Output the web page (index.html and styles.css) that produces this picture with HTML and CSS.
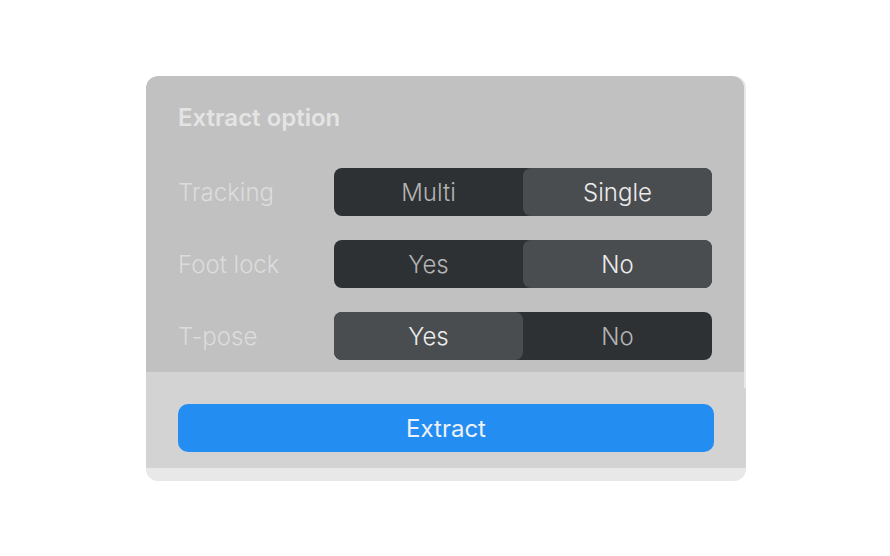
FILE: index.html
```html
<!DOCTYPE html>
<html>
<head>
<meta charset="utf-8">
<link rel="stylesheet" href="styles.css">
</head>
<body>
<div class="page">
  <div class="card">
    <div class="options">
      <div class="title">Extract option</div>
      <div class="rows">
        <div class="row">
          <div class="label">Tracking</div>
          <div class="seg">
            <div class="seg-item">Multi</div>
            <div class="seg-item active">Single</div>
          </div>
        </div>
        <div class="row">
          <div class="label">Foot lock</div>
          <div class="seg">
            <div class="seg-item">Yes</div>
            <div class="seg-item active">No</div>
          </div>
        </div>
        <div class="row">
          <div class="label">T-pose</div>
          <div class="seg">
            <div class="seg-item active">Yes</div>
            <div class="seg-item">No</div>
          </div>
        </div>
      </div>
    </div>
    <div class="footer">
      <button class="extract">Extract</button>
    </div>
  </div>
</div>
</body>
</html>
```

FILE: styles.css
```css
html, body {
  margin: 0;
  padding: 0;
  background: #ffffff;
}
body {
  font-family: Inter, "Noto Sans", sans-serif;
}
.page {
  width: 890px;
  height: 556px;
  padding-top: 76px;
  padding-left: 146px;
  box-sizing: border-box;
}
.card {
  width: 600px;
  background: #e8e8e8;
  border-radius: 12px;
  overflow: hidden;
  padding-bottom: 13px;
}
.options {
  background: #c1c1c1;
  margin-right: 2px;
  border-radius: 12px 12px 0 0;
  padding: 29px 32px 12px 32px;
}
.title {
  font-size: 24px;
  line-height: 26px;
  font-weight: 600;
  color: #e4e4e4;
}
.rows {
  margin-top: 37px;
  display: flex;
  flex-direction: column;
  gap: 24px;
}
.row {
  display: flex;
  align-items: center;
  height: 48px;
}
.label {
  width: 156px;
  font-size: 24px;
  line-height: 28px;
  padding-top: 2px;
  font-weight: 300;
  color: #dcdcdc;
}
.seg {
  width: 378px;
  height: 48px;
  display: flex;
  background: #2e3134;
  border-radius: 8px;
}
.seg-item {
  flex: 1;
  display: flex;
  align-items: center;
  justify-content: center;
  font-size: 24px;
  line-height: 28px;
  padding-top: 2px;
  font-weight: 300;
  color: #b4b4b4;
  border-radius: 8px;
}
.seg-item.active {
  background: #4a4d50;
  color: #ececec;
}
.footer {
  position: relative;
  background: #d3d3d3;
  padding: 32px 32px 16px 32px;
}
.footer::after {
  content: "";
  position: absolute;
  top: 0;
  right: 0;
  width: 2px;
  height: 16px;
  background: #e8e8e8;
}
.extract {
  display: block;
  width: 536px;
  height: 48px;
  border: none;
  border-radius: 10px;
  background: #248df2;
  color: #eef2f8;
  font-family: Inter, "Noto Sans", sans-serif;
  font-size: 24px;
  line-height: 28px;
  font-weight: 400;
  padding: 2px 0 0 0;
}
```
